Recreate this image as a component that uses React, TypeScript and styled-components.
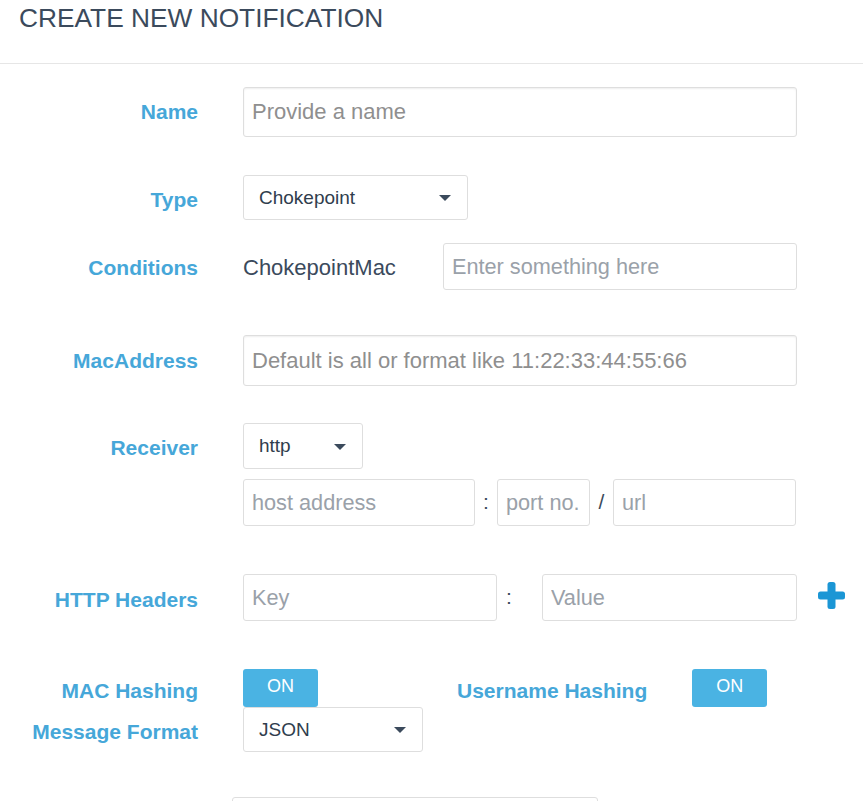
import React from "react";
import styled, { createGlobalStyle } from "styled-components";

const Global = createGlobalStyle`
  html, body { margin: 0; padding: 0; background: #ffffff; }
  body { font-family: "Liberation Sans", Arial, Helvetica, sans-serif; }
  * { box-sizing: border-box; }
`;

const Page = styled.div`
  width: 863px;
  height: 801px;
  overflow: hidden;
  background: #fff;
`;

const Header = styled.header`
  height: 64px;
  border-bottom: 1px solid #e6e6e6;
  padding-left: 19px;
`;

const Title = styled.h1`
  margin: 0;
  font-size: 26.3px;
  line-height: 36px;
  font-weight: normal;
  color: #3b4a5c;
`;

const Form = styled.div`
  display: flex;
  flex-direction: column;
`;

const Row = styled.div<{ $mt: number }>`
  display: flex;
  align-items: center;
  margin-top: ${(p) => p.$mt}px;
`;

const Label = styled.label<{ $drop?: number }>`
  flex: none;
  width: 198px;
  text-align: right;
  font-size: 21px;
  line-height: 24px;
  font-weight: bold;
  color: #46a7d9;
  white-space: nowrap;
  padding-top: ${(p) => p.$drop ?? 2}px;
`;

const InlineLabel = styled(Label)`
  width: auto;
  margin-left: 139px;
`;

const Controls = styled.div`
  margin-left: 45px;
  display: flex;
  align-items: center;
`;

const TextInput = styled.input<{ $w: number; $h: number; $inset?: boolean; $neutral?: boolean }>`
  width: ${(p) => p.$w}px;
  height: ${(p) => p.$h}px;
  flex: none;
  margin: 0;
  padding: 0 8px;
  border: 1px solid #dedede;
  border-radius: 3px;
  background: #fff;
  font-family: "Liberation Sans", Arial, Helvetica, sans-serif;
  font-size: ${(p) => (p.$neutral ? 22 : 21.7)}px;
  color: #3b4a5c;
  outline: none;
  box-shadow: ${(p) => (p.$inset ? "inset 0 1px 2px rgba(0,0,0,0.07)" : "none")};
  &::placeholder {
    color: ${(p) => (p.$neutral ? "#8f8f8f" : "#9aa1a9")};
    opacity: 1;
  }
`;

const Select = styled.button<{ $w: number; $h: number }>`
  width: ${(p) => p.$w}px;
  height: ${(p) => p.$h}px;
  flex: none;
  margin: 0;
  padding: 0 16px 0 15px;
  display: flex;
  align-items: center;
  justify-content: space-between;
  border: 1px solid #dedede;
  border-radius: 3px;
  background: #fff;
  font-family: "Liberation Sans", Arial, Helvetica, sans-serif;
  font-size: 19px;
  color: #2f3d4d;
  cursor: pointer;
`;

const Caret = styled.span`
  width: 0;
  height: 0;
  border-left: 6px solid transparent;
  border-right: 6px solid transparent;
  border-top: 6px solid #3b4a5c;
  margin-top: 1px;
`;

const StaticText = styled.span`
  flex: none;
  width: 200px;
  font-size: 22px;
  color: #3b4a5c;
  padding-top: 2px;
`;

const Sep = styled.span<{ $w: number; $left?: boolean }>`
  flex: none;
  width: ${(p) => p.$w}px;
  display: flex;
  justify-content: ${(p) => (p.$left ? "flex-start" : "center")};
  padding-left: ${(p) => (p.$left ? 9 : 0)}px;
  font-size: 21px;
  color: #3b4a5c;
  margin-top: -2px;
`;

const Toggle = styled.button<{ $ml?: number }>`
  flex: none;
  width: 75px;
  height: 38px;
  margin: 0 0 0 ${(p) => p.$ml ?? 0}px;
  padding: 0 0 4px 0;
  border: none;
  border-radius: 3px;
  background: #4ab3e3;
  color: #fff;
  font-family: "Liberation Sans", Arial, Helvetica, sans-serif;
  font-size: 18px;
  cursor: pointer;
`;

const AddButton = styled.button`
  flex: none;
  margin: 0 0 4px 21px;
  padding: 0;
  border: none;
  background: none;
  width: 27px;
  height: 27px;
  display: flex;
  cursor: pointer;
`;

const BottomBox = styled.div`
  margin-top: 45px;
  margin-left: 232px;
  width: 366px;
  height: 44px;
  border: 1px solid #dedede;
  border-radius: 3px;
`;

export default function App() {
  return (
    <Page>
      <Global />
      <Header>
        <Title>CREATE NEW NOTIFICATION</Title>
      </Header>
      <Form>
        <Row $mt={23}>
          <Label $drop={0}>Name</Label>
          <Controls>
            <TextInput $w={554} $h={50} $inset $neutral placeholder="Provide a name" />
          </Controls>
        </Row>
        <Row $mt={38}>
          <Label $drop={4}>Type</Label>
          <Controls>
            <Select $w={225} $h={45}>
              <span>Chokepoint</span>
              <Caret />
            </Select>
          </Controls>
        </Row>
        <Row $mt={23}>
          <Label>Conditions</Label>
          <Controls>
            <StaticText>ChokepointMac</StaticText>
            <TextInput $w={354} $h={47} placeholder="Enter something here" />
          </Controls>
        </Row>
        <Row $mt={45}>
          <Label $drop={0}>MacAddress</Label>
          <Controls>
            <TextInput
              $w={554}
              $h={51}
              $inset
              $neutral
              placeholder="Default is all or format like 11:22:33:44:55:66"
            />
          </Controls>
        </Row>
        <Row $mt={37}>
          <Label $drop={4}>Receiver</Label>
          <Controls>
            <Select $w={120} $h={46}>
              <span>http</span>
              <Caret />
            </Select>
          </Controls>
        </Row>
        <Row $mt={10}>
          <Label />
          <Controls>
            <TextInput $w={232} $h={47} placeholder="host address" />
            <Sep $w={22}>:</Sep>
            <TextInput $w={93} $h={47} placeholder="port no." />
            <Sep $w={23}>/</Sep>
            <TextInput $w={183} $h={47} placeholder="url" />
          </Controls>
        </Row>
        <Row $mt={48}>
          <Label $drop={4}>HTTP Headers</Label>
          <Controls>
            <TextInput $w={254} $h={47} placeholder="Key" />
            <Sep $w={45} $left>
              :
            </Sep>
            <TextInput $w={255} $h={47} placeholder="Value" />
            <AddButton aria-label="Add header">
              <svg width="27" height="27" viewBox="0 0 27 27">
                <rect x="9.5" y="0" width="8" height="27" rx="2.5" fill="#1b96d5" />
                <rect x="0" y="9.5" width="27" height="8" rx="2.5" fill="#1b96d5" />
              </svg>
            </AddButton>
          </Controls>
        </Row>
        <Row $mt={48}>
          <Label $drop={6}>MAC Hashing</Label>
          <Controls>
            <Toggle>ON</Toggle>
            <InlineLabel $drop={6}>Username Hashing</InlineLabel>
            <Toggle $ml={45}>ON</Toggle>
          </Controls>
        </Row>
        <Row $mt={0}>
          <Label $drop={4}>Message Format</Label>
          <Controls>
            <Select $w={180} $h={45}>
              <span>JSON</span>
              <Caret />
            </Select>
          </Controls>
        </Row>
        <BottomBox />
      </Form>
    </Page>
  );
}
